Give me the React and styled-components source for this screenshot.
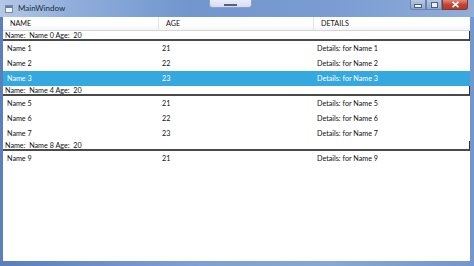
import React from "react";
import styled, { createGlobalStyle } from "styled-components";

const GlobalStyle = createGlobalStyle`
  html, body {
    margin: 0;
    padding: 0;
    width: 474px;
    height: 266px;
    overflow: hidden;
    background: #6f93cb;
  }
`;

const groups = [
  { key: "Name 0", age: 20, rows: [["Name 1", 21], ["Name 2", 22], ["Name 3", 23]] },
  { key: "Name 4", age: 20, rows: [["Name 5", 21], ["Name 6", 22], ["Name 7", 23]] },
  { key: "Name 8", age: 20, rows: [["Name 9", 21]] },
];

const COLS = "156px 155px 1fr";

export default function App() {
  return (
    <>
      <GlobalStyle />
      <Window>
        <TitleBar>
          <AppIcon>
            <svg width="8" height="8" viewBox="0 0 8 8">
              <rect x="0.5" y="0.5" width="7" height="7" fill="#f4f6fa" stroke="#7d8aa0" />
              <rect x="1" y="1" width="6" height="2" fill="#5b7fb8" />
            </svg>
          </AppIcon>
          <Title>MainWindow</Title>
          <PeekTab>
            <Dash />
          </PeekTab>
          <Controls>
            <CtrlButton>
              <MinGlyph />
            </CtrlButton>
            <CtrlButton>
              <MaxGlyph />
            </CtrlButton>
            <CloseButton>
              <svg width="9" height="7" viewBox="0 0 9 7">
                <path d="M1.5 0.8 L7.5 6.2 M7.5 0.8 L1.5 6.2" stroke="#fff" strokeWidth="1.6" />
              </svg>
            </CloseButton>
          </Controls>
        </TitleBar>
        <Client>
          <HeaderRow>
            <HeaderCell>NAME</HeaderCell>
            <HeaderCell>AGE</HeaderCell>
            <HeaderCell $last>DETAILS</HeaderCell>
          </HeaderRow>
          {groups.map((g) => (
            <div key={g.key}>
              <GroupHeader>
                Name:&nbsp; {g.key} Age:&nbsp; {g.age}
              </GroupHeader>
              {g.rows.map(([name, age]) => (
                <Row key={name} $selected={name === "Name 3"}>
                  <Cell>{name}</Cell>
                  <Cell>{age}</Cell>
                  <Cell>Details: for {name}</Cell>
                </Row>
              ))}
            </div>
          ))}
        </Client>
      </Window>
    </>
  );
}

const Window = styled.div`
  width: 474px;
  height: 266px;
  display: flex;
  flex-direction: column;
  background: linear-gradient(90deg, #5a7fba 0%, #7d9fd3 40%, #86a7d8 70%, #7396cc 100%);
  font-family: Lato, "Open Sans", sans-serif;
`;

const TitleBar = styled.div`
  height: 17px;
  display: flex;
  align-items: flex-start;
  background: linear-gradient(90deg, #b3c8e6 0%, #90aedc 15%, #7196cd 40%, #7a9cd2 70%, #90add9 100%);
`;

const AppIcon = styled.div`
  margin: 5px 0 0 5px;
  width: 8px;
  height: 8px;
  display: flex;
`;

const Title = styled.div`
  margin: 3px 0 0 5px;
  font-size: 8px;
  line-height: 11px;
  color: #1d2a3a;
`;

const PeekTab = styled.div`
  margin-left: 144px;
  width: 41px;
  height: 7px;
  background: linear-gradient(#e8edf9, #d3dcf2);
  border: 1px solid #8c9fc6;
  border-top: none;
  border-radius: 0 0 3px 3px;
  display: flex;
  align-items: center;
  justify-content: center;
`;

const Dash = styled.div`
  width: 13px;
  height: 2px;
  background: #5a6272;
  margin-top: 2px;
`;

const Controls = styled.div`
  margin-left: auto;
  margin-right: 6px;
  display: flex;
  height: 10px;
`;

const CtrlButton = styled.div`
  width: 16px;
  height: 10px;
  background: linear-gradient(#b7c7e2, #8fa7d1);
  border: 1px solid #6c82ad;
  border-top: none;
  display: flex;
  align-items: center;
  justify-content: center;
  box-sizing: border-box;
  &:first-child {
    border-radius: 0 0 0 3px;
  }
`;

const MinGlyph = styled.div`
  width: 6px;
  height: 2px;
  margin-top: 3px;
  background: #f2f5fb;
  border: 1px solid #4d5f80;
`;

const MaxGlyph = styled.div`
  width: 5px;
  height: 4px;
  border: 1px solid #4d5f80;
  background: #e9eef8;
`;

const CloseButton = styled.div`
  width: 26px;
  height: 10px;
  background: linear-gradient(#dd8a7c, #c4402f 55%, #b9382a);
  border: 1px solid #7a3a35;
  border-top: none;
  border-radius: 0 0 3px 0;
  display: flex;
  align-items: center;
  justify-content: center;
  box-sizing: border-box;
`;

const Client = styled.div`
  flex: 1;
  margin: 0 4px 5px 3px;
  background: #ffffff;
  overflow: hidden;
`;

const HeaderRow = styled.div`
  display: grid;
  grid-template-columns: ${COLS};
  height: 14px;
  background: linear-gradient(#ffffff 0%, #ffffff 55%, #f4f5f6 100%);
  border-bottom: 1px solid #d5d5d5;
  box-sizing: border-box;
`;

const HeaderCell = styled.div`
  padding-left: 7px;
  font-size: 7.2px;
  line-height: 13px;
  color: #111;
  border-right: ${(p) => (p.$last ? "none" : "1px solid #e2e3ea")};
`;

const GroupHeader = styled.div`
  height: 10px;
  box-sizing: border-box;
  padding-left: 2px;
  font-size: 7.2px;
  line-height: 9px;
  color: #111;
  border-bottom: 2px solid #4a4a4a;
  border-right: 1px solid #333;
  white-space: nowrap;
`;

const Row = styled.div`
  display: grid;
  grid-template-columns: ${COLS};
  height: 15px;
  align-items: center;
  background: ${(p) => (p.$selected ? "#35a8e0" : "transparent")};
  color: ${(p) => (p.$selected ? "#ffffff" : "#111")};
`;

const Cell = styled.div`
  padding-left: 3px;
  font-size: 7.2px;
  line-height: 15px;
  white-space: nowrap;
  &:first-child {
    padding-left: 4px;
  }
`;
